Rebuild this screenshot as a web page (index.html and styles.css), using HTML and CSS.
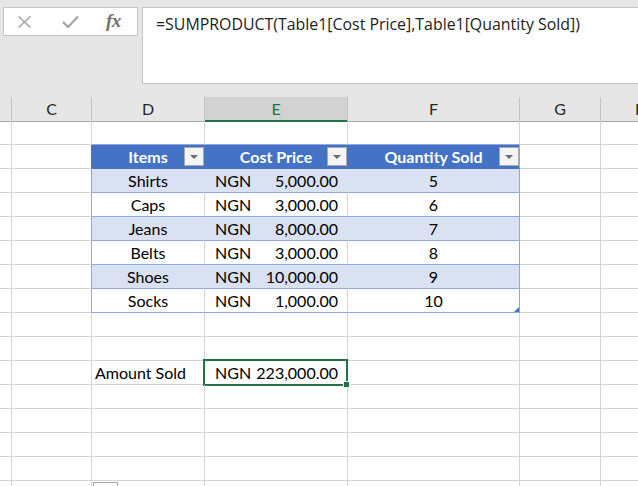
FILE: index.html
```html
<!DOCTYPE html>
<html>
<head>
<meta charset="utf-8">
<link rel="stylesheet" href="styles.css">
</head>
<body>
<div class="fbar">
  <div class="cmd">
    <svg class="ic-x" width="15" height="12" viewBox="0 0 15 12"><path d="M1.5 0.5 L13.5 11.5 M13.5 0.5 L1.5 11.5" stroke="#a9a9a9" stroke-width="1.6" fill="none"/></svg>
    <svg class="ic-ok" width="17" height="13" viewBox="0 0 17 13"><path d="M1 7 L6 12 L16 1.5" stroke="#a9a9a9" stroke-width="2.4" fill="none"/></svg>
    <span class="fx">fx</span>
  </div>
  <div class="formula">=SUMPRODUCT(Table1[Cost Price],Table1[Quantity Sold])</div>
</div>
<div class="sheet">
  <div class="row hdr"><div></div><div>C</div><div>D</div><div class="sel">E</div><div>F</div><div>G</div><div>H</div></div>
  <div class="row"><div></div><div></div><div class="top"></div><div class="top"></div><div class="top"></div><div></div><div></div></div>
  <div class="row thead"><div></div><div class="lb"></div><div class="th">Items<span class="dd"></span></div><div class="th">Cost Price<span class="dd"></span></div><div class="th last">Quantity Sold<span class="dd"></span></div><div></div><div></div></div>
  <div class="row band"><div></div><div class="lb"></div><div class="tc item">Shirts</div><div class="tc acc"><span>NGN</span><span>5,000.00</span></div><div class="tc qty last">5</div><div></div><div></div></div>
  <div class="row plain"><div></div><div class="lb"></div><div class="tc item">Caps</div><div class="tc acc"><span>NGN</span><span>3,000.00</span></div><div class="tc qty last">6</div><div></div><div></div></div>
  <div class="row band"><div></div><div class="lb"></div><div class="tc item">Jeans</div><div class="tc acc"><span>NGN</span><span>8,000.00</span></div><div class="tc qty last">7</div><div></div><div></div></div>
  <div class="row plain"><div></div><div class="lb"></div><div class="tc item">Belts</div><div class="tc acc"><span>NGN</span><span>3,000.00</span></div><div class="tc qty last">8</div><div></div><div></div></div>
  <div class="row band"><div></div><div class="lb"></div><div class="tc item">Shoes</div><div class="tc acc"><span>NGN</span><span>10,000.00</span></div><div class="tc qty last">9</div><div></div><div></div></div>
  <div class="row plain"><div></div><div class="lb"></div><div class="tc item">Socks</div><div class="tc acc"><span>NGN</span><span>1,000.00</span></div><div class="tc qty last">10<span class="resize"></span></div><div></div><div></div></div>
  <div class="row"><div></div><div></div><div></div><div></div><div></div><div></div><div></div></div>
  <div class="row"><div></div><div></div><div></div><div></div><div></div><div></div><div></div></div>
  <div class="row"><div></div><div></div><div class="label">Amount Sold</div><div class="acc active"><span>NGN</span><span>223,000.00</span><span class="handle"></span></div><div></div><div></div><div></div></div>
  <div class="row"><div></div><div></div><div></div><div></div><div></div><div></div><div></div></div>
  <div class="row"><div></div><div></div><div></div><div></div><div></div><div></div><div></div></div>
  <div class="row"><div></div><div></div><div></div><div></div><div></div><div></div><div></div></div>
  <div class="row"><div></div><div></div><div></div><div></div><div></div><div></div><div></div></div>
  <div class="row"><div></div><div></div><div></div><div></div><div></div><div></div><div></div></div>
</div>
<div class="paste"></div>
</body>
</html>
```

FILE: styles.css
```css
* { box-sizing: border-box; margin: 0; padding: 0; }
body {
  width: 638px;
  height: 486px;
  overflow: hidden;
  background: #fff;
  font-family: Lato, "Open Sans", sans-serif;
  position: relative;
}
.fbar {
  height: 97px;
  background: #e6e6e6;
  display: flex;
  align-items: flex-start;
  padding-top: 7px;
}
.cmd {
  margin-left: 3px;
  width: 135px;
  height: 29px;
  background: #fff;
  border: 1px solid #c6c6c6;
  display: flex;
  align-items: center;
  padding-left: 13px;
}
.ic-ok { margin-left: 30px; }
.fx {
  margin-left: 27px;
  font-family: "Liberation Serif", serif;
  font-style: italic;
  font-weight: bold;
  font-size: 19px;
  color: #707070;
  letter-spacing: -0.5px;
  margin-top: -2px;
}
.formula {
  margin-left: 4px;
  flex: 1;
  height: 77px;
  background: #fff;
  border: 1px solid #c6c6c6;
  border-right: none;
  padding: 5px 0 0 13px;
  font-family: "Open Sans", sans-serif;
  font-size: 15.9px;
  color: #222;
  white-space: nowrap;
}
.sheet { width: 682px; }
.row {
  display: grid;
  grid-template-columns: 12px 80px 113px 143px 172px 81px 81px;
  height: 24px;
}
.row > div {
  border-right: 1px solid #d4d4d4;
  border-bottom: 1px solid #d4d4d4;
  line-height: 23px;
  font-size: 16px;
  white-space: nowrap;
  position: relative;
  color: #000;
}
.hdr > div {
  background: #e6e6e6;
  border-right-color: #c3c3c3;
  border-bottom-color: #a6a6a6;
  text-align: center;
  color: #262626;
}
.hdr > div.sel {
  background: #d2d2d2;
  color: #217346;
  border-bottom: 2px solid #217346;
}
.row > div.top { border-bottom-color: #8ea9db; }
.row > div.lb { border-right-color: #8ea9db; }
.thead > div.lb { border-right-color: #4472c4; }
.thead > div.th {
  background: #4472c4;
  color: #fff;
  font-weight: bold;
  text-align: center;
  border-right-color: #4472c4;
  border-bottom-color: #4472c4;
}
.row > div.last { border-right-color: #8ea9db; }
.dd {
  position: absolute;
  right: 0;
  top: 2px;
  width: 20px;
  height: 19px;
  background: #f4f4f4;
  border: 1px solid #a9a9a9;
}
.dd::after {
  content: "";
  position: absolute;
  left: 5px;
  top: 7px;
  border-left: 4px solid transparent;
  border-right: 4px solid transparent;
  border-top: 4px solid #6b6b6b;
}
.row > div.tc { border-bottom-color: #8ea9db; }
.band > div.tc { background: #d9e1f2; border-right-color: #d9e1f2; }
.band > div.tc.last { border-right-color: #8ea9db; }
.item, .qty { text-align: center; }
.acc {
  display: flex;
  justify-content: space-between;
  padding: 0 9px 0 10px;
}
.label { padding-left: 3px; }
.active::after {
  content: "";
  position: absolute;
  left: -2px;
  top: -2px;
  right: -1px;
  bottom: -2px;
  border: 2px solid #217346;
}
.handle {
  position: absolute;
  right: -3px;
  bottom: -4px;
  width: 7px;
  height: 7px;
  background: #217346;
  border: 1px solid #fff;
  z-index: 2;
}
.resize {
  position: absolute;
  right: 0;
  bottom: 0;
  width: 5px;
  height: 5px;
  background: #4472c4;
  clip-path: polygon(100% 0, 100% 100%, 0 100%);
}
.paste {
  position: absolute;
  left: 93px;
  top: 482px;
  width: 25px;
  height: 10px;
  border: 1px solid #a6a6a6;
  background: #fff;
}
```
